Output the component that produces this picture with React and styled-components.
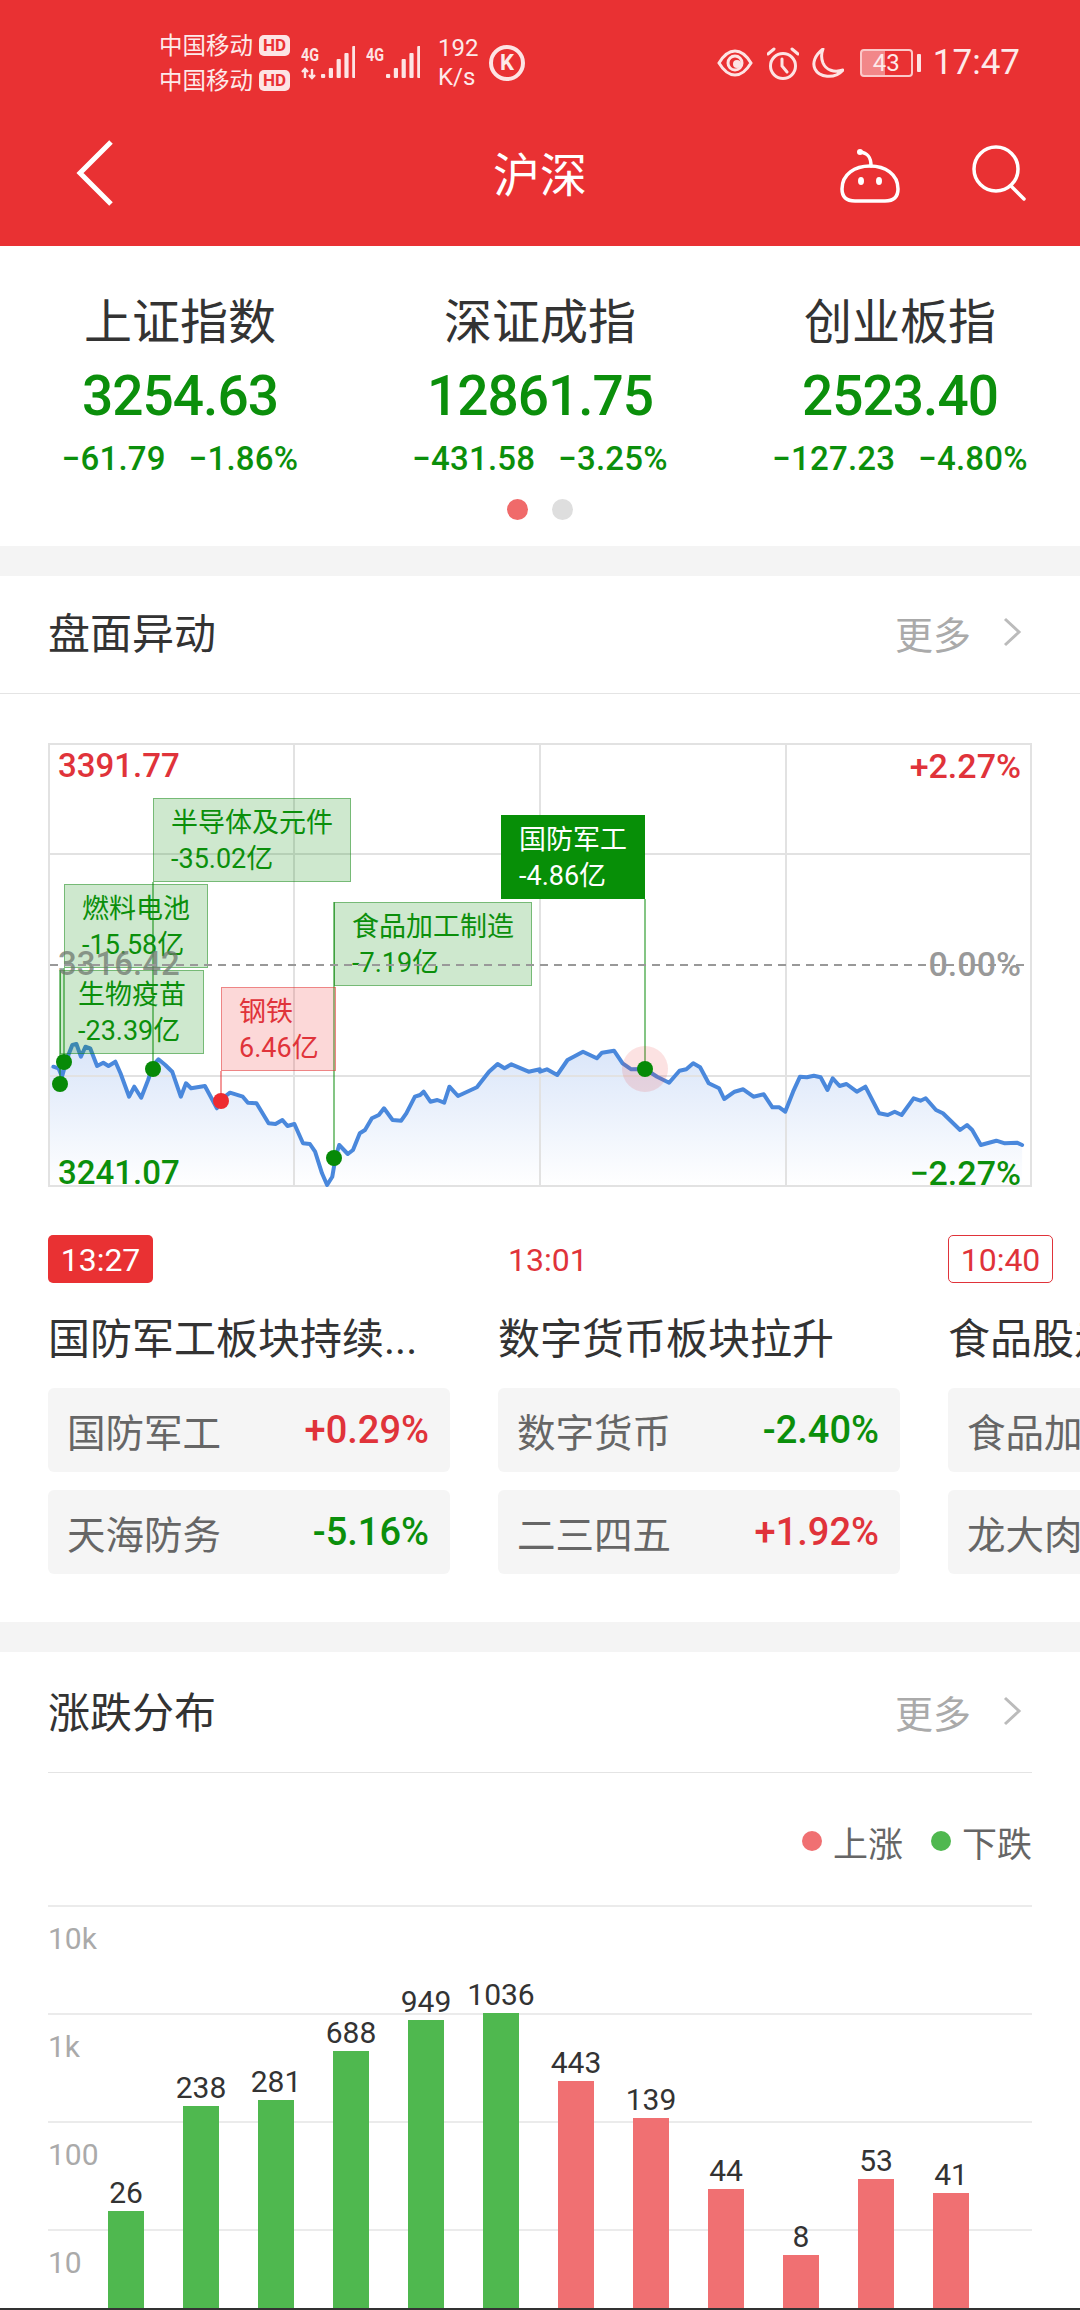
import React from 'react'
import styled, { createGlobalStyle } from 'styled-components'

const RED = '#e93133'
const UP = '#e0333a'
const DOWN = '#0b8f0b'

const GlobalStyle = createGlobalStyle`
  html, body { margin: 0; padding: 0; background: #fff; }
  body { font-family: Roboto, "Noto Sans CJK SC", sans-serif; }
  * { box-sizing: border-box; }
`

const Page = styled.div`
  width: 1080px;
  height: 2310px;
  overflow: hidden;
  background: #fff;
  border-bottom: 2px solid #333;
`

const Header = styled.header`
  height: 246px;
  background: ${RED};
  color: #fff;
`

const StatusBar = styled.div`
  height: 126px;
  display: flex;
  align-items: center;
  padding: 0 60px 0 159px;
  color: #fdeaea;
`

const Carriers = styled.div`
  display: flex;
  flex-direction: column;
  gap: 13px;
`

const Carrier = styled.div`
  display: flex;
  align-items: center;
  gap: 6px;
  height: 22px;
  font-size: 23.5px;
  line-height: 22px;
  white-space: nowrap;
`

const HdBadge = styled.span`
  width: 31px;
  height: 21px;
  border-radius: 5px;
  background: #fde4e4;
  color: ${RED};
  font-size: 17px;
  font-weight: 700;
  line-height: 21px;
  text-align: center;
`

const SignalSvg = styled.svg`
  display: block;
  width: 54px;
  height: 34px;
  margin-left: ${p => p.$gap}px;
`

const Speed = styled.div`
  margin-left: 18px;
  width: 40px;
  font-size: 24px;
  line-height: 29px;
`

const KRing = styled.div`
  margin-left: 11px;
  width: 36px;
  height: 36px;
  border: 4px solid #fde4e4;
  border-radius: 50%;
  font-size: 22px;
  font-weight: 700;
  line-height: 28px;
  text-align: center;
`

const StatusRight = styled.div`
  margin-left: auto;
  display: flex;
  align-items: center;
`

const StatusIcon = styled.svg`
  display: block;
  margin-left: ${p => p.$gap || 0}px;
`

const Battery = styled.div`
  width: 53px;
  height: 28px;
  margin-left: 16px;
  border: 2px solid #fbc9c9;
  border-radius: 4px;
  font-size: 24px;
  line-height: 24px;
  text-align: center;
  background: linear-gradient(90deg, rgba(255,255,255,.42) 0 23px, transparent 23px);
`

const BatteryNub = styled.div`
  width: 4px;
  height: 18px;
  margin-left: 4px;
  background: #fde4e4;
  border-radius: 1px;
`

const Clock = styled.div`
  margin-left: 12px;
  font-size: 35px;
  line-height: 40px;
`

const Nav = styled.nav`
  height: 120px;
  display: grid;
  grid-template-columns: 1fr auto 1fr;
  align-items: center;
  padding: 0 54px 20px 54px;
`

const BackIcon = styled.svg`
  display: block;
  margin: 0 0 6px 22px;
`

const NavTitle = styled.div`
  font-size: 47px;
  line-height: 60px;
`

const NavActions = styled.div`
  display: flex;
  justify-content: flex-end;
  align-items: center;
  gap: 72px;
`

const NavIcon = styled.svg`
  display: block;
  margin-bottom: ${p => p.$lift || 0}px;
`

const Indices = styled.section`
  height: 300px;
  padding-top: 49px;
`

const IndexRow = styled.div`
  display: flex;
`

const IndexCol = styled.div`
  width: 360px;
  text-align: center;
`

const IndexName = styled.div`
  font-size: 48px;
  line-height: 56px;
  color: #333;
`

const IndexValue = styled.div`
  margin-top: 18px;
  font-size: 55px;
  letter-spacing: -1px;
  line-height: 54px;
  font-weight: 500;
  color: ${DOWN};
`

const IndexDelta = styled.div`
  display: flex;
  justify-content: center;
  gap: 23px;
  margin-top: 18px;
  font-size: 33px;
  letter-spacing: .2px;
  line-height: 36px;
  font-weight: 500;
  color: ${DOWN};
`

const Pager = styled.div`
  display: flex;
  justify-content: center;
  gap: 24px;
  margin-top: 22px;
`

const PagerDot = styled.span`
  width: 21px;
  height: 21px;
  border-radius: 50%;
  background: ${p => (p.$active ? '#f06a6a' : '#dedede')};
`

const Gap = styled.div`
  height: 30px;
  background: #f4f4f4;
`

const SectionHead = styled.div`
  display: flex;
  align-items: center;
  justify-content: space-between;
  height: ${p => p.$h}px;
  margin: 0 ${p => (p.$inset ? 48 : 0)}px;
  padding: ${p => (p.$inset ? '3px 0 0' : '0 48px')};
  border-bottom: 1px solid #e4e4e4;
`

const SectionTitle = styled.h2`
  margin: 0;
  font-size: 42px;
  line-height: 50px;
  font-weight: 400;
  color: #333;
`

const MoreLink = styled.div`
  display: flex;
  align-items: center;
  gap: 31px;
  margin: 0 10px 5px 0;
  font-size: 38px;
  color: #aaa;
`

const ChartWrap = styled.div`
  padding: 49px 48px 0;
`

const Chart = styled.div`
  position: relative;
  width: 984px;
  height: 444px;
  overflow: hidden;
`

const ChartSvg = styled.svg`
  position: absolute;
  inset: 0;
  display: block;
`

const ChartLabel = styled.div`
  position: absolute;
  top: ${p => p.$top}px;
  ${p => (p.$right ? 'right: 11px;' : 'left: 10px;')}
  font-size: ${p => (p.$right ? 34 : 33)}px;
  line-height: 40px;
  font-weight: 500;
  color: ${p => p.$color};
`

const Annotation = styled.div`
  position: absolute;
  left: ${p => p.$x}px;
  top: ${p => p.$y}px;
  width: ${p => p.$w}px;
  height: 84px;
  padding: 6px 0 0 17px;
  font-size: 27px;
  line-height: 36px;
  white-space: nowrap;
  color: ${p => (p.$tone === 'up' ? UP : p.$tone === 'solid' ? '#fff' : DOWN)};
  background: ${p => (p.$tone === 'up' ? 'rgba(240,60,60,.2)' : p.$tone === 'solid' ? '#078f07' : 'rgba(10,140,10,.2)')};
  border: 1px solid ${p => (p.$tone === 'up' ? 'rgba(224,50,50,.5)' : p.$tone === 'solid' ? '#078f07' : 'rgba(10,130,10,.45)')};
`

const ZeroLine = styled.div`
  position: absolute;
  left: 2px;
  right: 6px;
  top: 221px;
  height: 2px;
  background: repeating-linear-gradient(90deg, #999 0 8px, transparent 8px 14px);
`

const NewsRow = styled.div`
  display: flex;
  gap: 48px;
  padding: 48px 0 0 48px;
  height: 435px;
`

const NewsCol = styled.div`
  flex: 0 0 402px;
  width: 402px;
`

const TimeTag = styled.div`
  display: inline-block;
  width: ${p => (p.$plain ? 'auto' : '105px')};
  height: 48px;
  border-radius: 5px;
  font-size: 32px;
  text-align: center;
  padding-left: ${p => (p.$plain ? 10 : 0)}px;
  color: ${p => (p.$solid ? '#fff' : UP)};
  background: ${p => (p.$solid ? RED : 'transparent')};
  border: ${p => (p.$outline ? `1px solid ${UP}` : 'none')};
  line-height: ${p => (p.$outline ? 48 : 50)}px;
`

const NewsTitle = styled.div`
  margin-top: 32px;
  height: 50px;
  font-size: 42px;
  line-height: 50px;
  color: #333;
  white-space: nowrap;
`

const Chip = styled.div`
  display: flex;
  align-items: center;
  justify-content: space-between;
  height: 84px;
  margin-top: ${p => p.$mt}px;
  padding: 0 21px 0 19px;
  border-radius: 6px;
  background: #f5f5f5;
`

const ChipName = styled.span`
  font-size: 38.5px;
  color: #666;
  white-space: nowrap;
`

const ChipValue = styled.span`
  font-size: 38px;
  font-weight: 500;
  color: ${p => (p.$up ? UP : DOWN)};
`

const Legend = styled.div`
  display: flex;
  justify-content: flex-end;
  align-items: center;
  gap: 11px;
  height: 132px;
  padding: 4px 48px 0 0;
  font-size: 35px;
  color: #666;
`

const LegendDot = styled.span`
  width: 20px;
  height: 20px;
  border-radius: 50%;
  margin-left: ${p => p.$ml || 0}px;
  background: ${p => p.$color};
`

const BarChart = styled.div`
  position: relative;
  margin: 0 48px;
  height: 405px;
`

const GridLines = styled.div`
  position: absolute;
  inset: 0;
  display: flex;
  flex-direction: column;
`

const GridRow = styled.div`
  flex: none;
  height: 108px;
  border-top: 2px solid #ebebeb;
  padding-top: 12px;
  font-size: 30px;
  line-height: 40px;
  color: #aaa;
`

const Bars = styled.div`
  position: relative;
  height: 100%;
  display: flex;
  align-items: flex-end;
  gap: 39px;
  padding-left: 60px;
`

const BarCol = styled.div`
  width: 36px;
  display: flex;
  flex-direction: column;
  align-items: center;
`

const BarValue = styled.span`
  font-size: 30px;
  line-height: 30px;
  margin-bottom: 3px;
  color: #333;
  white-space: nowrap;
`

const Bar = styled.div`
  width: 36px;
  height: ${p => p.$h}px;
  background: ${p => (p.$up ? '#f07072' : '#4fb84f')};
`

// intraday line traced off the two halves of the chart, crop px
const leftHalf = [
  [155,1010],[170,1015],[180,1040],[195,985],[210,945],[222,942],[235,980],[248,950],[262,955],[282,1008],[300,998],[315,1008],
  [335,995],[350,1030],[375,1100],[390,1070],[410,1103],[430,1050],[445,1005],[460,988],[480,1005],[500,1025],[525,1100],[540,1060],
  [555,1075],[595,1068],[630,1135],[640,1110],[668,1088],[705,1100],[720,1118],[745,1120],[780,1180],[800,1182],[820,1170],[835,1188],
  [855,1182],[880,1240],[900,1242],[915,1265],[935,1330],[950,1365],[965,1340],[975,1280],[985,1245],[1010,1272],[1025,1260],[1045,1210],
  [1060,1200],[1080,1165],[1100,1155],[1115,1135],[1140,1170],[1165,1172],[1180,1150],[1205,1100],[1220,1095],[1230,1085],[1250,1115],[1270,1110],
  [1290,1118],[1305,1070],[1330,1098],[1385,1072],[1420,1025],[1445,1002],[1465,1015],[1485,1003],[1535,1025],[1568,1018]
]
const rightHalf = [
  [0,1025],[20,1018],[50,1035],[80,990],[125,965],[165,985],[180,968],[215,962],[240,1000],[265,1018],[305,1017],[340,1040],
  [375,1058],[405,1022],[425,1018],[445,1000],[465,1012],[490,1060],[520,1075],[535,1107],[565,1085],[590,1078],[620,1100],[650,1093],
  [675,1132],[695,1132],[712,1145],[735,1085],[755,1040],[775,1042],[795,1037],[815,1042],[835,1080],[850,1045],[870,1068],[890,1062],
  [920,1085],[945,1070],[985,1150],[1010,1155],[1030,1145],[1050,1155],[1085,1105],[1105,1112],[1120,1105],[1150,1140],[1170,1150],[1220,1200],
  [1240,1185],[1255,1200],[1280,1245],[1325,1232],[1350,1240],[1385,1238],[1400,1245]
]
const toChart = offset => ([x, y]) => [+(offset + x / 2.904 - 48).toFixed(1), +(y / 3 - 13).toFixed(1)]
const line = [...leftHalf.map(toChart(0)), ...rightHalf.map(toChart(540))]
const linePath = line.map(([x, y], i) => `${i ? 'L' : 'M'}${x} ${y}`).join(' ')
const lastX = line[line.length - 1][0]
const areaPath = `M0 444 L0 ${line[0][1]} L${line.map(([x, y]) => `${x} ${y}`).join(' L')} L${lastX} 444 Z`

const annotations = [
  { x: 105, y: 55, w: 198, tone: 'down', name: '半导体及元件', amount: '-35.02亿' },
  { x: 16, y: 141, w: 144, tone: 'down', name: '燃料电池', amount: '-15.58亿' },
  { x: 12, y: 227, w: 144, tone: 'down', name: '生物疫苗', amount: '-23.39亿' },
  { x: 173, y: 244, w: 115, tone: 'up', name: '钢铁', amount: '6.46亿' },
  { x: 286, y: 159, w: 198, tone: 'down', name: '食品加工制造', amount: '-7.19亿' },
  { x: 453, y: 72, w: 144, tone: 'solid', name: '国防军工', amount: '-4.86亿' }
]

const stems = [
  { x: 12, y1: 227, y2: 341, color: '#0a8c0a' },
  { x: 16, y1: 225, y2: 319, color: '#0a8c0a' },
  { x: 105, y1: 139, y2: 326, color: '#0a8c0a' },
  { x: 173, y1: 328, y2: 358, color: '#e93133' },
  { x: 286, y1: 159, y2: 415, color: '#0a8c0a' },
  { x: 597, y1: 156, y2: 326, color: '#0a8c0a' }
]

const news = [
  {
    time: '13:27', kind: 'solid', title: '国防军工板块持续...',
    chips: [['国防军工', '+0.29%', true], ['天海防务', '-5.16%', false]]
  },
  {
    time: '13:01', kind: 'plain', title: '数字货币板块拉升',
    chips: [['数字货币', '-2.40%', false], ['二三四五', '+1.92%', true]]
  },
  {
    time: '10:40', kind: 'outline', title: '食品股走低',
    chips: [['食品加工制造', '-1.40%', false], ['龙大肉食', '-5.02%', false]]
  }
]

const bars = [
  [26, 99, false], [238, 204, false], [281, 210, false], [688, 259, false], [949, 290, false], [1036, 297, false],
  [443, 229, true], [139, 192, true], [44, 121, true], [8, 55, true], [53, 131, true], [41, 117, true]
]

function Signal({ gap, arrows }) {
  const heights = [4, 10, 19, 25, 32]
  return (
    <SignalSvg $gap={gap} viewBox="0 0 54 34">
      <text x="0" y="15" fill="#fde4e4" fontSize="18" fontWeight="700" textLength="18" lengthAdjust="spacingAndGlyphs">4G</text>
      {arrows && <path d="M4 32 V23 M1 26 L4 23 L7 26 M11 23 V32 M8 29 L11 32 L14 29" fill="none" stroke="#fde4e4" strokeWidth="2.4" />}
      {heights.map((h, i) => (
        <rect key={i} x={20 + i * 7.8} y={32 - h} width="4.2" height={h} rx="1" fill="#fde4e4" />
      ))}
    </SignalSvg>
  )
}

function Status() {
  return (
    <StatusBar>
      <Carriers>
        <Carrier>中国移动<HdBadge>HD</HdBadge></Carrier>
        <Carrier>中国移动<HdBadge>HD</HdBadge></Carrier>
      </Carriers>
      <Signal gap={11} arrows />
      <Signal gap={11} />
      <Speed>192<br />K/s</Speed>
      <KRing>K</KRing>
      <StatusRight>
        <StatusIcon width="36" height="28" viewBox="0 0 36 28" fill="none" stroke="#fde4e4" strokeWidth="3">
          <path d="M2 14 C8 4 13 2 18 2 C23 2 28 4 34 14 C28 24 23 26 18 26 C13 26 8 24 2 14 Z" />
          <circle cx="18" cy="14" r="7" />
          <circle cx="20" cy="15" r="4" fill="#fde4e4" stroke="none" />
        </StatusIcon>
        <StatusIcon $gap={14} width="32" height="33" viewBox="0 0 32 33" fill="none" stroke="#fde4e4" strokeWidth="3">
          <circle cx="16" cy="19" r="12.5" />
          <path d="M15 12 V19 L20 25 M1 7 L7 2 M31 7 L25 2" strokeLinecap="round" />
        </StatusIcon>
        <StatusIcon $gap={13} width="32" height="31" viewBox="0 0 32 31" fill="none" stroke="#fde4e4" strokeWidth="3" strokeLinejoin="round">
          <path d="M11 1 C3 7 0 15 3 21 C7 29 22 32 31 22 C22 25 14 22 11 15 C9 10 9 6 11 1 Z" />
        </StatusIcon>
        <Battery>43</Battery>
        <BatteryNub />
        <Clock>17:47</Clock>
      </StatusRight>
    </StatusBar>
  )
}

function MoreArrow() {
  return (
    <svg width="20" height="30" viewBox="0 0 20 30" fill="none" stroke="#bbb" strokeWidth="3">
      <path d="M3 2 L17 15 L3 28" />
    </svg>
  )
}

function TrendChart() {
  return (
    <Chart>
      <ChartSvg width="984" height="444" viewBox="0 0 984 444">
        <defs>
          <linearGradient id="area" x1="0" y1="0" x2="0" y2="1">
            <stop offset="0" stopColor="#d9e5f9" />
            <stop offset="1" stopColor="#ffffff" />
          </linearGradient>
        </defs>
        <path d={areaPath} fill="url(#area)" />
        <g stroke="#e2e2e2" strokeWidth="2" fill="none">
          <rect x="1" y="1" width="982" height="442" />
          <path d="M246 0 V444 M492 0 V444 M738 0 V444 M0 111 H984 M0 333 H984" />
        </g>
        <path d={linePath} fill="none" stroke="#4a88dc" strokeWidth="4" strokeLinejoin="round" strokeLinecap="round" />
        {stems.map(s => (
          <path key={s.x} d={`M${s.x} ${s.y1} V${s.y2}`} stroke={s.color} strokeOpacity=".5" strokeWidth="2" />
        ))}
        <circle cx="597" cy="326" r="23" fill="#e93133" fillOpacity=".14" />
        <g fill="#078a07">
          <circle cx="12" cy="341" r="8" />
          <circle cx="16" cy="319" r="8" />
          <circle cx="105" cy="326" r="8" />
          <circle cx="286" cy="415" r="8" />
          <circle cx="597" cy="326" r="8" />
        </g>
        <circle cx="173" cy="358" r="8" fill="#ee2a30" />
      </ChartSvg>
      {annotations.map(a => (
        <Annotation key={a.name} $x={a.x} $y={a.y} $w={a.w} $tone={a.tone}>
          {a.name}<br />{a.amount}
        </Annotation>
      ))}
      <ChartLabel $top={3} $color={UP}>3391.77</ChartLabel>
      <ChartLabel $top={3} $right $color={UP}>+2.27%</ChartLabel>
      <ChartLabel $top={201} $color="rgba(110,120,110,.75)">3316.42</ChartLabel>
      <ChartLabel $top={201} $right $color="#999">0.00%</ChartLabel>
      <ZeroLine />
      <ChartLabel $top={410} $color={DOWN}>3241.07</ChartLabel>
      <ChartLabel $top={410} $right $color={DOWN}>−2.27%</ChartLabel>
    </Chart>
  )
}

export default function App() {
  return (
    <Page>
      <GlobalStyle />
      <Header>
        <Status />
        <Nav>
          <BackIcon width="38" height="66" viewBox="0 0 38 66" fill="none" stroke="#fff" strokeWidth="5">
            <path d="M35 2 L4 33 L35 64" />
          </BackIcon>
          <NavTitle>沪深</NavTitle>
          <NavActions>
            <NavIcon width="60" height="56" viewBox="0 0 60 56" fill="none" stroke="#fff" strokeWidth="3.5" strokeLinecap="round">
              <path d="M2 41 C2 26 15 18 30 18 C45 18 58 26 58 41 C58 50 53 53 45 53 L15 53 C7 53 2 50 2 41 Z" />
              <path d="M31 18 C31 9 28 5 20 4" />
              <circle cx="20" cy="4" r="3" fill="#fff" stroke="none" />
              <ellipse cx="21" cy="33" rx="3" ry="4" fill="#fff" stroke="none" />
              <ellipse cx="39" cy="33" rx="3" ry="4" fill="#fff" stroke="none" />
            </NavIcon>
            <NavIcon $lift={6} width="54" height="56" viewBox="0 0 54 56" fill="none" stroke="#fff" strokeWidth="3.5" strokeLinecap="round">
              <circle cx="24" cy="24" r="22" />
              <path d="M39 41 L52 54" />
            </NavIcon>
          </NavActions>
        </Nav>
      </Header>

      <Indices>
        <IndexRow>
          {[
            ['上证指数', '3254.63', '−61.79', '−1.86%'],
            ['深证成指', '12861.75', '−431.58', '−3.25%'],
            ['创业板指', '2523.40', '−127.23', '−4.80%']
          ].map(([name, value, diff, pct]) => (
            <IndexCol key={name}>
              <IndexName>{name}</IndexName>
              <IndexValue>{value}</IndexValue>
              <IndexDelta><span>{diff}</span><span>{pct}</span></IndexDelta>
            </IndexCol>
          ))}
        </IndexRow>
        <Pager><PagerDot $active /><PagerDot /></Pager>
      </Indices>
      <Gap />

      <SectionHead $h={118}>
        <SectionTitle>盘面异动</SectionTitle>
        <MoreLink>更多<MoreArrow /></MoreLink>
      </SectionHead>
      <ChartWrap><TrendChart /></ChartWrap>

      <NewsRow>
        {news.map(n => (
          <NewsCol key={n.time}>
            <TimeTag $solid={n.kind === 'solid'} $outline={n.kind === 'outline'} $plain={n.kind === 'plain'}>{n.time}</TimeTag>
            <NewsTitle>{n.title}</NewsTitle>
            {n.chips.map(([name, value, up], i) => (
              <Chip key={name} $mt={i ? 18 : 23}>
                <ChipName>{name}</ChipName>
                <ChipValue $up={up}>{value}</ChipValue>
              </Chip>
            ))}
          </NewsCol>
        ))}
      </NewsRow>
      <Gap />

      <SectionHead $h={121} $inset>
        <SectionTitle>涨跌分布</SectionTitle>
        <MoreLink>更多<MoreArrow /></MoreLink>
      </SectionHead>
      <Legend>
        <LegendDot $color="#f07072" />上涨
        <LegendDot $color="#4fb84f" $ml={17} />下跌
      </Legend>
      <BarChart>
        <GridLines>
          {['10k', '1k', '100', '10'].map(t => <GridRow key={t}>{t}</GridRow>)}
        </GridLines>
        <Bars>
          {bars.map(([value, h, up], i) => (
            <BarCol key={i}>
              <BarValue>{value}</BarValue>
              <Bar $h={h} $up={up} />
            </BarCol>
          ))}
        </Bars>
      </BarChart>
    </Page>
  )
}
